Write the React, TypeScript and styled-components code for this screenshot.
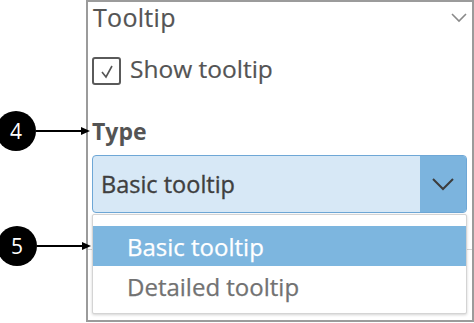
import React from "react";
import styled, { createGlobalStyle } from "styled-components";

const GlobalStyle = createGlobalStyle`
  html, body {
    margin: 0;
    padding: 0;
    background: #fff;
  }
  body {
    font-family: "Open Sans", "Noto Sans", sans-serif;
  }
`;

const Page = styled.div`
  position: relative;
  width: 474px;
  height: 323px;
  display: flex;
  overflow: hidden;
`;

const Panel = styled.section`
  box-sizing: border-box;
  margin-left: 86px;
  width: 388px;
  height: 322px;
  border: 2px solid #9b9b9b;
  padding: 0 5px 0 4px;
  display: flex;
  flex-direction: column;
  color: #545454;
`;

const Header = styled.div`
  display: flex;
  justify-content: space-between;
  align-items: flex-start;
  height: 30px;
`;

const Title = styled.h2`
  margin: 0 0 0 1px;
  font-size: 25px;
  font-weight: 400;
  line-height: 30px;
  letter-spacing: 0.3px;
  -webkit-text-stroke: 0.2px #545454;
`;

const HeaderChevron = styled.svg`
  margin-top: 11px;
`;

const CheckRow = styled.label`
  display: flex;
  align-items: flex-start;
  gap: 9px;
  margin-top: 25px;
`;

const Box = styled.span`
  box-sizing: border-box;
  width: 29px;
  height: 28px;
  border: 2px solid #5a5a5a;
  border-radius: 3px;
  display: flex;
  align-items: center;
  justify-content: center;
`;

const CheckText = styled.span`
  font-size: 24.5px;
  line-height: 24px;
  -webkit-text-stroke: 0.2px #545454;
`;

const FieldLabel = styled.div`
  position: relative;
  margin-top: 32px;
  font-size: 23px;
  font-weight: 700;
  line-height: 28px;
`;

const SelectWrap = styled.div`
  position: relative;
  margin-top: 10px;
`;

const SelectBox = styled.div`
  box-sizing: border-box;
  height: 58px;
  display: flex;
  border: 1.5px solid #6ea7d6;
  border-radius: 4px;
  background: #d7e8f6;
  overflow: hidden;
`;

const SelectValue = styled.div`
  flex: 1;
  display: flex;
  align-items: center;
  padding-left: 8px;
  font-size: 23.5px;
  color: #3f3f3f;
  -webkit-text-stroke: 0.35px #3f3f3f;
`;

const SelectButton = styled.div`
  width: 46px;
  background: #7cb4de;
  display: flex;
  align-items: center;
  justify-content: center;
`;

const Menu = styled.ul`
  position: absolute;
  top: calc(100% + 1px);
  left: 0;
  right: 0;
  box-sizing: border-box;
  height: 100px;
  margin: 0;
  padding: 11px 0 9px;
  list-style: none;
  background: #fff;
  border: 1px solid #d4d4d4;
  border-radius: 2px;
  box-shadow: 0 1px 3px rgba(0, 0, 0, 0.18);
  z-index: 2;
`;

const Option = styled.li<{ selected?: boolean }>`
  position: relative;
  height: 40px;
  display: flex;
  align-items: center;
  padding-left: 34px;
  font-size: 24px;
  background: ${({ selected }) => (selected ? "#7db6df" : "transparent")};
  color: ${({ selected }) => (selected ? "#fff" : "#727272")};
  -webkit-text-stroke: 0.25px
    ${({ selected }) => (selected ? "#fff" : "#727272")};
`;

const Divider = styled.hr`
  margin: 36px -5px 0 -4px;
  border: 0;
  border-top: 1px solid #d6d6d6;
`;

const Callout = styled.div<{ offset: number }>`
  position: absolute;
  left: ${({ offset }) => -offset}px;
  top: 50%;
  transform: translateY(-50%);
  display: flex;
  align-items: center;
  -webkit-text-stroke: 0;
`;

const Badge = styled.span`
  width: 40px;
  height: 40px;
  margin-left: -2px;
  border-radius: 50%;
  background: #000;
  color: #fff;
  font-size: 21px;
  font-weight: 400;
  line-height: 40px;
  text-align: center;
`;

const Arrow = () => (
  <svg width="54" height="10" viewBox="0 0 54 10">
    <line x1="0" y1="5" x2="46" y2="5" stroke="#000" strokeWidth="2" />
    <polygon points="45,1 54,5 45,9" fill="#000" />
  </svg>
);

const Marker = ({ n, offset }: { n: number; offset: number }) => (
  <Callout offset={offset}>
    <Badge>{n}</Badge>
    <Arrow />
  </Callout>
);

export default function App() {
  return (
    <>
      <GlobalStyle />
      <Page>
        <Panel>
          <Header>
            <Title>Tooltip</Title>
            <HeaderChevron width="16" height="10" viewBox="0 0 16 10">
              <polyline
                points="1,1 8,8 15,1"
                fill="none"
                stroke="#8a8a8a"
                strokeWidth="1.6"
              />
            </HeaderChevron>
          </Header>
          <CheckRow>
            <Box>
              <svg width="18" height="18" viewBox="0 0 18 18">
                <polyline
                  points="4,10 8,15 14,4"
                  fill="none"
                  stroke="#555"
                  strokeWidth="1.6"
                />
              </svg>
            </Box>
            <CheckText>Show tooltip</CheckText>
          </CheckRow>
          <FieldLabel>
            <Marker n={4} offset={94} />
            Type
          </FieldLabel>
          <SelectWrap>
            <SelectBox>
              <SelectValue>Basic tooltip</SelectValue>
              <SelectButton>
                <svg width="22" height="13" viewBox="0 0 22 13">
                  <polyline
                    points="1,1 11,11 21,1"
                    fill="none"
                    stroke="#3c3c3c"
                    strokeWidth="2"
                  />
                </svg>
              </SelectButton>
            </SelectBox>
            <Menu>
              <Option selected>
                <Marker n={5} offset={94} />
                Basic tooltip
              </Option>
              <Option>Detailed tooltip</Option>
            </Menu>
          </SelectWrap>
          <Divider />
        </Panel>
      </Page>
    </>
  );
}
